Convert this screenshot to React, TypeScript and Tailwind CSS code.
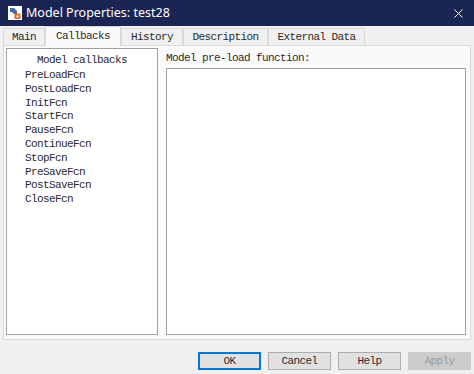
import React from "react";

const mono = { fontFamily: '"Liberation Mono", "Noto Sans CJK SC", monospace' };

function Tab({ label, active, w }: { label: string; active?: boolean; w: string }) {
  return (
    <div
      className={
        active
          ? `relative z-10 flex h-[20px] ${w} items-center justify-center self-end border border-b-0 border-[#d9d9d9] bg-[#fafafa] -mb-px`
          : `flex h-[17px] ${w} items-center justify-center self-end border border-b-0 border-[#d9d9d9] bg-[#f0f0f0]`
      }
    >
      <span className="text-[11px] tracking-[-0.6px] text-[#2a2a2a]" style={mono}>
        {label}
      </span>
    </div>
  );
}

function Btn({ label, primary, disabled }: { label: string; primary?: boolean; disabled?: boolean }) {
  return (
    <div
      className={
        "flex h-[18px] w-[63px] items-center justify-center border text-[11px] tracking-[-0.6px] " +
        (primary
          ? "border-[#0078d7] bg-[#e1e1e1] text-[#2a2a2a] shadow-[inset_0_0_0_1px_#0078d7]"
          : disabled
          ? "border-[#cccccc] bg-[#cccccc] text-[#9a9a9a]"
          : "border-[#adadad] bg-[#e1e1e1] text-[#2a2a2a]")
      }
      style={mono}
    >
      {label}
    </div>
  );
}

export default function App() {
  const items = [
    "PreLoadFcn",
    "PostLoadFcn",
    "InitFcn",
    "StartFcn",
    "PauseFcn",
    "ContinueFcn",
    "StopFcn",
    "PreSaveFcn",
    "PostSaveFcn",
    "CloseFcn",
  ];
  return (
    <div className="flex h-[374px] w-[474px] flex-col overflow-hidden bg-[#f0f0f0]">
      {/* title bar */}
      <div className="flex h-[26px] shrink-0 items-center bg-[#1b2553] pl-[8px] pr-[11px]">
        <svg width="14" height="14" viewBox="0 0 14 14" className="shrink-0">
          <rect x="0" y="0" width="14" height="14" fill="#ffffff" />
          <path d="M2 2h4l3 3v3H6L4 6H2z" fill="#3d6aa8" />
          <rect x="6.5" y="7.5" width="6" height="5.5" fill="#e07020" />
          <rect x="8.5" y="9.5" width="2" height="2" fill="#ffffff" />
        </svg>
        <span
          className="ml-[4px] text-[12.5px] text-white"
          style={{ fontFamily: '"Noto Sans", "Open Sans", sans-serif' }}
        >
          Model Properties: test28
        </span>
        <svg width="9" height="9" viewBox="0 0 9 9" className="ml-auto">
          <path d="M0.5 0.5L8.5 8.5M8.5 0.5L0.5 8.5" stroke="#ffffff" strokeWidth="1" />
        </svg>
      </div>

      {/* tabs */}
      <div className="flex h-[19px] shrink-0 items-end pl-[3px]">
        <Tab label="Main" w="w-[42px]" />
        <Tab label="Callbacks" active w="w-[76px]" />
        <Tab label="History" w="w-[62px]" />
        <Tab label="Description" w="w-[85px]" />
        <Tab label="External Data" w="w-[97px]" />
      </div>

      {/* panel */}
      <div className="mx-[3px] flex h-[295px] shrink-0 gap-[8px] border border-[#d9d9d9] bg-[#fafafa] pl-[2px] pr-[4px] pt-[2px] pb-[4px]">
        <div className="flex w-[152px] flex-col border border-[#a0a0a0] bg-white">
          <div className="mt-[4px] text-center text-[11px] leading-[14px] tracking-[-0.6px] text-[#2a2a2a]" style={mono}>
            Model callbacks
          </div>
          <div className="mt-[2px] flex flex-col pl-[18px]">
            {items.map((it) => (
              <div key={it} className="text-[11px] leading-[13.8px] tracking-[-0.6px] text-[#2a2a2a]" style={mono}>
                {it}
              </div>
            ))}
          </div>
        </div>
        <div className="flex flex-1 flex-col">
          <div className="mt-[3px] h-[17px] text-[11px] leading-[14px] tracking-[-0.6px] text-[#2a2a2a]" style={mono}>
            Model pre-load function:
          </div>
          <div className="flex-1 border border-[#a0a0a0] bg-white" />
        </div>
      </div>

      {/* buttons */}
      <div className="flex flex-1 items-start justify-end gap-[7px] pr-[3px] pt-[12px]">
        <Btn label="OK" primary />
        <Btn label="Cancel" />
        <Btn label="Help" />
        <Btn label="Apply" disabled />
      </div>
    </div>
  );
}
